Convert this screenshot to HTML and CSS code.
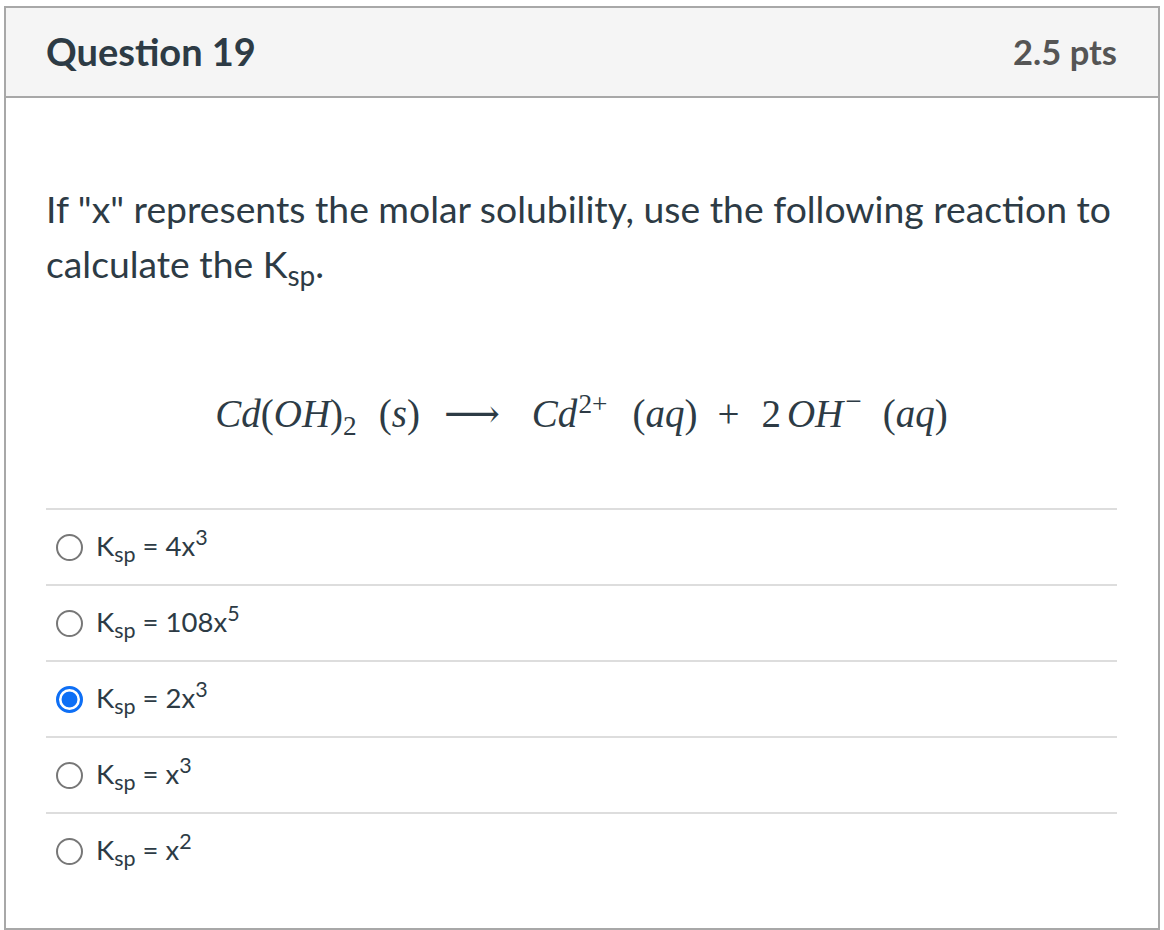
FILE: index.html
```html
<!DOCTYPE html>
<html>
<head>
<meta charset="utf-8">
<link rel="stylesheet" href="styles.css">
</head>
<body>
<div class="card">
  <div class="card-header">
    <h2 class="title">Question 19</h2>
    <span class="pts">2.5 pts</span>
  </div>
  <div class="card-body">
    <p class="question">If "x" represents the molar solubility, use the following reaction to calculate the K<sub>sp</sub>.</p>
    <div class="equation">
      <span class="m">Cd</span><span class="r">(</span><span class="m">OH</span><span class="r">)</span><sub class="r">2</sub><span class="gap g1"></span><span class="r">(</span><span class="m">s</span><span class="r">)</span><span class="gap g2"></span><span class="r arrow">⟶</span><span class="gap g3"></span><span class="m">Cd</span><sup class="r">2+</sup><span class="gap g4"></span><span class="r">(</span><span class="m">aq</span><span class="r">)</span><span class="gap g5"></span><span class="r">+</span><span class="gap g6"></span><span class="r">2</span><span class="gap g7"></span><span class="m">OH</span><sup class="r minus">−</sup><span class="gap g8"></span><span class="r">(</span><span class="m">aq</span><span class="r">)</span>
    </div>
    <ul class="answers">
      <li class="answer"><span class="radio"></span><span class="label">K<sub>sp</sub> = 4x<sup>3</sup></span></li>
      <li class="answer"><span class="radio"></span><span class="label">K<sub>sp</sub> = 108x<sup>5</sup></span></li>
      <li class="answer"><span class="radio checked"></span><span class="label">K<sub>sp</sub> = 2x<sup>3</sup></span></li>
      <li class="answer"><span class="radio"></span><span class="label">K<sub>sp</sub> = x<sup>3</sup></span></li>
      <li class="answer"><span class="radio"></span><span class="label">K<sub>sp</sub> = x<sup>2</sup></span></li>
    </ul>
  </div>
</div>
</body>
</html>
```
FILE: styles.css
```css
html, body {
  margin: 0;
  padding: 0;
  background: #fff;
}
body {
  font-family: Lato, "Noto Sans", sans-serif;
  color: #2d3b45;
}
.card {
  margin: 6px 0 0 4px;
  width: 1156px;
  box-sizing: border-box;
  border: 2px solid #a8a8a8;
}
.card-header {
  height: 88px;
  background: #f5f5f5;
  border-bottom: 2px solid #a8a8a8;
  display: flex;
  align-items: center;
  justify-content: space-between;
  padding: 0 41px 0 40px;
}
.title {
  margin: 0;
  font-size: 38px;
  font-weight: 700;
  color: #2d3b45;
  position: relative;
  top: -1px;
}
.pts {
  font-size: 34.5px;
  font-weight: 700;
  color: #555;
  position: relative;
  top: -1px;
}
.card-body {
  padding: 0 41px 0 40px;
  height: 830px;
  box-sizing: border-box;
}
.question {
  margin: 0;
  padding-top: 83px;
  font-size: 37.3px;
  line-height: 55px;
}
.question sub {
  font-size: 0.75em;
  vertical-align: baseline;
  position: relative;
  top: 0.3em;
}
.equation {
  text-align: center;
  font-family: "Liberation Serif", "DejaVu Serif", serif;
  font-size: 39px;
  margin-top: 95px;
  height: 48px;
  line-height: 48px;
  color: #2d3b45;
  white-space: nowrap;
}
.equation .m { font-style: italic; }
.equation sub, .equation sup {
  font-size: 0.7em;
  vertical-align: baseline;
  position: relative;
}
.equation sub { top: 0.28em; }
.equation sup { top: -0.5em; margin-left: 1px; }
.equation sup.minus { font-size: 0.75em; top: -0.55em; margin-left: 2px; }
.gap { display: inline-block; }
.g1 { width: 22px; }
.g2 { width: 24px; }
.g3 { width: 32px; }
.g4 { width: 25px; }
.g5 { width: 20px; }
.g6 { width: 22px; }
.g7 { width: 6px; }
.g8 { width: 21px; }
.answers {
  list-style: none;
  margin: 0;
  margin-top: 70px;
  padding: 0;
}
.answer {
  border-top: 2px solid #dddddd;
  height: 74px;
  display: flex;
  align-items: center;
  padding-left: 10px;
}
.radio {
  width: 23px;
  height: 23px;
  border: 2px solid #777;
  border-radius: 50%;
  flex: none;
  margin-right: 13px;
}
.radio.checked {
  border: 3px solid #0e6ff5;
  width: 21px;
  height: 21px;
  background: radial-gradient(circle, #0e6ff5 0 7.5px, #fff 8.3px);
}
.label {
  font-size: 27.5px;
  line-height: 30px;
}
.label sub {
  font-size: 0.78em;
  vertical-align: baseline;
  position: relative;
  top: 0.3em;
}
.label sup {
  font-size: 0.78em;
  vertical-align: baseline;
  position: relative;
  top: -0.5em;
}
```
